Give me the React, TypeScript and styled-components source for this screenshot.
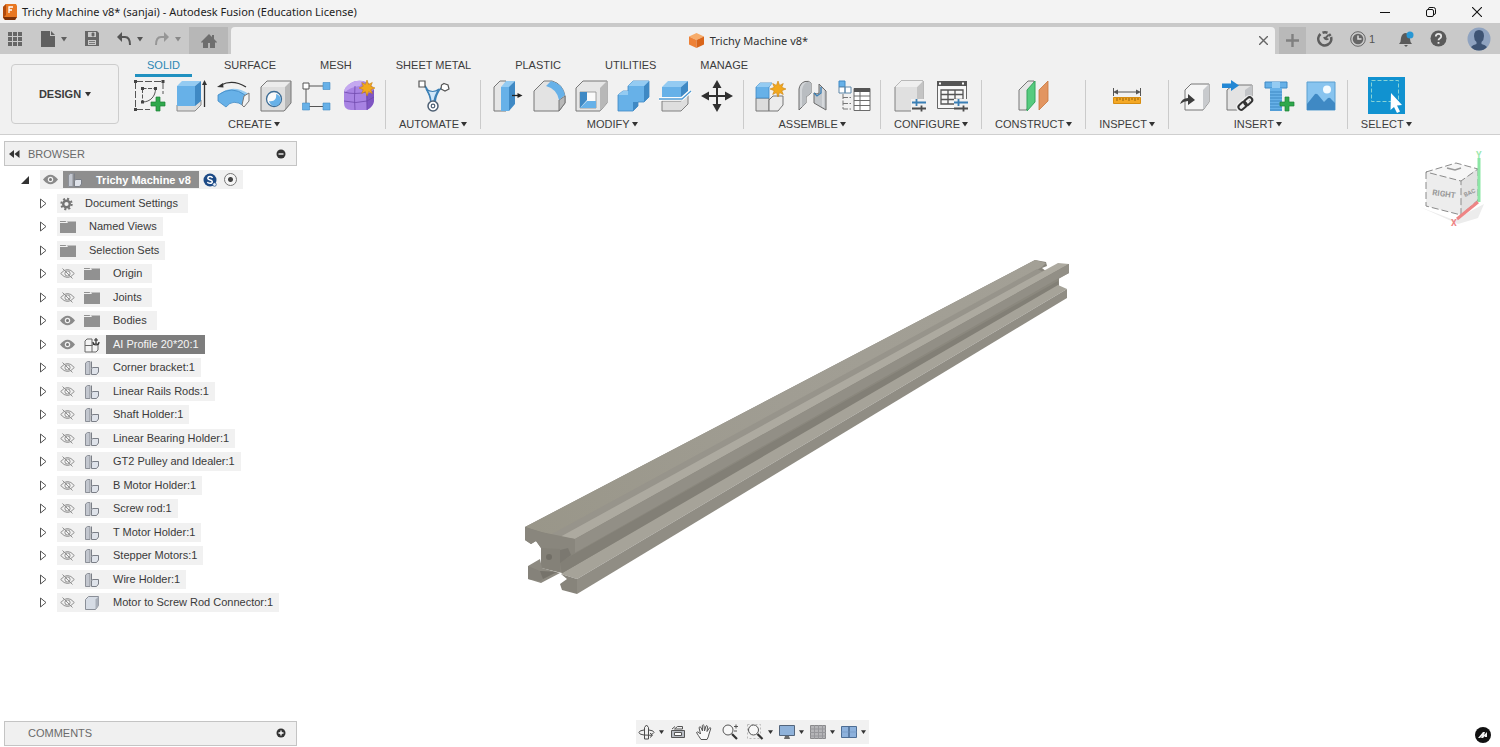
import React from "react";
import styled, { createGlobalStyle } from "styled-components";

const GlobalStyle = createGlobalStyle`
  *, *::before, *::after { box-sizing: border-box; }
  body {
    margin: 0;
    font-family: "Liberation Sans", Arial, sans-serif;
    font-size: 11px;
    line-height: 14px;
    color: #3c3c3c;
    background: #ffffff;
  }
  button { font: inherit; color: inherit; border: 0; padding: 0; background: none; }
  svg { display: block; flex: none; }
`;

const Page = styled.div`
  display: flex;
  flex-direction: column;
  min-height: 100vh;
`;

/* ---------- window title ---------- */

const TitleBar = styled.header`
  display: flex;
  align-items: center;
  height: 23px;
  padding-left: 2px;
  background: #f3f3f3;
`;

const WindowTitle = styled.h1`
  flex: 1;
  margin: 0 0 0 5px;
  font: 400 11px/16px "Noto Sans", "Open Sans", sans-serif;
  color: #1d1d1d;
  white-space: nowrap;
`;

const WindowButton = styled.button`
  display: grid;
  place-items: center;
  width: 46px;
  height: 23px;
`;

/* ---------- document bar ---------- */

const DocumentBar = styled.div`
  display: flex;
  height: 31px;
  background: #c9c9c9;
`;

const QuickTools = styled.div`
  display: flex;
  align-items: center;
  width: 189px;
  padding-left: 7px;
`;

const QuickButton = styled.button<{ $gap?: number }>`
  display: flex;
  align-items: center;
  gap: 6px;
  margin-right: ${(p) => p.$gap ?? 15}px;
`;

const HomeButton = styled.button`
  display: grid;
  place-items: center;
  width: 39px;
  margin-top: 4px;
  background: #b7b7b7;
`;

const DocumentTab = styled.div`
  display: flex;
  align-items: center;
  flex: 1;
  margin: 4px 0 0 3px;
  padding: 0 3px 0 10px;
  border-radius: 4px 4px 0 0;
  background: #f1f1f1;
`;

const DocumentName = styled.div`
  display: flex;
  flex: 1;
  align-items: center;
  justify-content: center;
  gap: 6px;
  font: 400 11px/16px "Noto Sans", "Open Sans", sans-serif;
  color: #333333;
`;

const IconButton = styled.button`
  display: grid;
  place-items: center;
  width: 16px;
  height: 16px;
`;

const NewTabButton = styled.button`
  display: grid;
  place-items: center;
  width: 27px;
  margin: 4px 0 0 4px;
  background: #b9b9b9;
`;

const AccountTools = styled.div`
  display: flex;
  align-items: center;
  padding: 0 9px 0 10px;
`;

const AccountButton = styled.button<{ $gap: number }>`
  display: flex;
  align-items: center;
  gap: 3px;
  margin-right: ${(p) => p.$gap}px;
  color: #555555;
`;

/* ---------- ribbon ---------- */

const Ribbon = styled.div`
  display: flex;
  height: 81px;
  padding-left: 11px;
  background: #f1f1f1;
  border-bottom: 1px solid #cfcfcf;
`;

const WorkspaceButton = styled.button`
  display: flex;
  align-items: center;
  justify-content: center;
  gap: 4px;
  width: 108px;
  height: 60px;
  margin-top: 10px;
  border: 1px solid #cdcdcd;
  border-radius: 4px;
  font-weight: 700;
`;

const RibbonBody = styled.div`
  flex: 1;
  padding-left: 4px;
`;

const RibbonTabs = styled.nav`
  display: flex;
  gap: 20px;
  padding-left: 12px;
`;

const RibbonTab = styled.button<{ $active?: boolean }>`
  height: 23px;
  padding: 2px 12px 0;
  border-bottom: 3px solid ${(p) => (p.$active ? "#2191c0" : "transparent")};
  color: ${(p) => (p.$active ? "#2a87b4" : "#3c3c3c")};
`;

const Groups = styled.div`
  display: flex;
  padding-top: 3px;
`;

const Group = styled.section`
  display: flex;
  flex-direction: column;
  align-items: center;
  height: 49px;
  border-right: 1px solid #cbcbcb;
  &:last-child { border-right: 0; }
`;

const GroupTools = styled.div`
  display: flex;
  gap: 10px;
  padding: 0 10px;
`;

const Tool = styled.button<{ $selected?: boolean }>`
  display: grid;
  place-items: center;
  width: ${(p) => (p.$selected ? 37 : 32)}px;
  height: ${(p) => (p.$selected ? 37 : 32)}px;
  margin: ${(p) => (p.$selected ? "-3px 0 -2px" : "0")};
  background: ${(p) => (p.$selected ? "#1192d0" : "none")};
`;

const GroupMenu = styled.button`
  display: flex;
  align-items: center;
  gap: 2px;
  margin-top: 5px;
  padding: 0 13px;
  white-space: nowrap;
`;

/* ---------- canvas ---------- */

const Canvas = styled.main`
  position: relative;
  display: flex;
  flex: 1;
  flex-direction: column;
  background: #ffffff;
`;

const Model = styled.svg`
  position: absolute;
  top: 120px;
  left: calc(50% - 230px);
`;

const ViewCube = styled.svg`
  position: absolute;
  top: 10px;
  right: 10px;
`;

const PanelHeader = styled.div<{ $indent?: boolean }>`
  display: flex;
  align-items: center;
  gap: 8px;
  width: 293px;
  height: 25px;
  padding: 0 7px 0 ${(p) => (p.$indent ? 23 : 4)}px;
  border: 1px solid #c4c4c4;
  background: #f0f0f0;
  color: #6a6a6a;
`;

const PanelTitle = styled.h2`
  flex: 1;
  margin: 0;
  font-size: 11px;
  font-weight: 400;
`;

const Browser = styled.aside`
  position: relative;
  flex: 1;
  padding: 6px 0 0 4px;
`;

const Tree = styled.ul`
  margin: 4px 0 0;
  padding: 0;
  list-style: none;
`;

const TreeItem = styled.li<{ $root?: boolean }>`
  display: flex;
  align-items: center;
  gap: ${(p) => (p.$root ? 10 : 9)}px;
  height: 19px;
  margin-top: 4px;
  padding-left: ${(p) => (p.$root ? 16 : 34)}px;
  &:nth-child(even) { margin-top: 5px; }
`;

const Twisty = styled.button`
  display: grid;
  place-items: center;
  width: 10px;
  height: 16px;
`;

const TreeContent = styled.div`
  display: flex;
  align-items: center;
  height: 19px;
  padding-left: 3px;
  background: #f1f1f1;
`;

const EyeButton = styled.button`
  display: grid;
  place-items: center;
  width: 15px;
  height: 19px;
  margin-right: 9px;
`;

const NodeLabel = styled.span<{ $selected?: boolean; $folder?: boolean; $tight?: boolean }>`
  height: 19px;
  margin-left: ${(p) => (p.$tight ? 2 : 6)}px;
  padding: 0 ${(p) => (p.$folder ? 10 : 6)}px 0 7px;
  line-height: 19px;
  white-space: nowrap;
  color: ${(p) => (p.$selected ? "#f6f6f6" : "#3a3a3a")};
  background: ${(p) => (p.$selected ? "#7d7d7d" : "none")};
`;

const RootLabel = styled.span`
  display: flex;
  align-items: center;
  gap: 13px;
  height: 17px;
  margin-left: -4px;
  padding: 0 8px 0 4px;
  background: #8e8e8e;
  color: #ffffff;
  font-weight: 700;
  white-space: nowrap;
`;

const SyncBadge = styled.span`
  display: grid;
  place-items: center;
  margin: 0 7px 0 4px;
`;

const ActivateRadio = styled.input`
  appearance: none;
  width: 13px;
  height: 13px;
  margin: 0 6px 0 0;
  border: 1px solid #777777;
  border-radius: 50%;
  background: radial-gradient(circle, #444444 0 2px, #f5f5f5 3px);
`;

const Footer = styled.footer`
  position: relative;
  display: grid;
  grid-template-columns: 1fr auto 1fr;
  align-items: center;
  padding: 0 0 1px 4px;
`;

const NavBar = styled.div`
  display: flex;
  align-items: center;
  height: 24px;
  margin-bottom: 2px;
  padding: 0 3px 0 2px;
  background: #f1f1f1;
`;

const NavButton = styled.button<{ $gap?: number }>`
  display: flex;
  align-items: center;
  gap: 4px;
  margin-right: ${(p) => p.$gap ?? 0}px;
`;

const AssistantButton = styled.button`
  place-self: end;
  margin: 0 9px 3px 0;
`;

/* ---------- small glyphs ---------- */

const Caret = ({ color = "#333", size = 6 }: { color?: string; size?: number }) => (
  <svg width={size} height="6" viewBox="0 0 6 6">
    <path d="M0 1h6L3 5.5z" fill={color} />
  </svg>
);

const Star = ({ x, y }: { x: number; y: number }) => (
  <g transform={`translate(${x} ${y})`}>
    <path
      d="M0-8 1.6-3.6 5.3-5.5 3.8-1.7 8 0 3.8 1.7 5.3 5.5 1.6 3.6 0 8-1.6 3.6-5.3 5.5-3.8 1.7-8 0-3.8-1.7-5.3-5.5-1.6-3.6z"
      fill="#f2a81d"
      stroke="#c98310"
      strokeWidth=".6"
    />
  </g>
);

const Plus = ({ x, y }: { x: number; y: number }) => (
  <path
    d={`M${x - 2} ${y - 7}h4v5h5v4h-5v5h-4v-5h-5v-4h5z`}
    fill="#2fa84c"
    stroke="#1d8238"
    strokeWidth=".7"
  />
);

const BLUE = "#67b1e8";
const BLUE_DARK = "#3f89c4";
const BLUE_LIGHT = "#94cbf2";
const EDGE = "#6b6b6b";

const Svg32 = ({ children }: { children: React.ReactNode }) => (
  <svg width="32" height="32" viewBox="0 0 32 32" fill="none" overflow="visible">
    {children}
  </svg>
);

const Sliders = ({ x, y }: { x: number; y: number }) => (
  <g transform={`translate(${x} ${y})`} strokeWidth="1.8">
    <path d="M0 2.500h14M4.500-1v7" stroke="#3a7fb5" />
    <path d="M0 8.500h14M9.500 5.500v6" stroke="#4d4d4d" />
  </g>
);

const icons = {
  sketch: (
    <Svg32>
      <path d="M3 1.500h27M2.500 2v27M30 2v12M3 29.500h14" stroke="#555" strokeDasharray="7 2" />
      <path d="M9.500 8.500h13M9.500 9v13" stroke="#555" strokeDasharray="4 1.500" />
      <path d="M22.500 9c0 7-5 13-13 13" stroke="#555" />
      <path d="M1 0h3v3H1zM28.500 0h3v3h-3zM1 28h3v3H1zM8 7h3v3H8zM21 7h3v3h-3zM8 20.500h3v3H8z" fill="#444" />
      <Plus x={25} y={24} />
    </Svg32>
  ),
  extrude: (
    <Svg32>
      <path d="M2 25h18l6-5v5l-6 6H2z" fill="#dcdcdc" stroke="#8a8a8a" />
      <path d="M2 6l5-5h19l-6 5z" fill={BLUE_LIGHT} />
      <path d="M2 6h18v20H2z" fill={BLUE} />
      <path d="M20 6l6-5v20l-6 5z" fill={BLUE_DARK} />
      <path d="M29.500 27V4" stroke="#333" strokeWidth="1.300" />
      <path d="M29.500 0l2.500 5h-5z" fill="#333" />
    </Svg32>
  ),
  revolve: (
    <Svg32>
      <path d="M4 5Q16-1 29 7" stroke="#333" strokeWidth="1.300" />
      <path d="M0 7l6-4 .5 4.500z" fill="#333" />
      <path d="M1 15Q15 3 32 14l-3 4Q15 9 3 19z" fill={BLUE_LIGHT} />
      <path d="M1 15Q15 5 28 15l-1 11Q16 18 9 27L1 21z" fill={BLUE} stroke={BLUE_DARK} strokeWidth=".8" />
      <path d="M27 16l5-3v8l-5 6-2-2z" fill="#f3f3f3" stroke="#777" />
    </Svg32>
  ),
  hole: (
    <Svg32>
      <path d="M2 7l6-6h24l-6 6z" fill="#ececec" />
      <path d="M26 7l6-6v22l-6 8z" fill="#b8b8b8" />
      <path d="M2 7h24v24H2z" fill="#dedede" />
      <path d="M2 7l6-6h24v22l-7 8H2z" stroke="#777" />
      <circle cx="15" cy="19" r="7.500" fill="#fafafa" stroke="#3d6d96" strokeWidth="1.300" />
      <path d="M17 14a6 6 0 1 1-7 7c5 1 8-2 7-7z" fill={BLUE} />
    </Svg32>
  ),
  pattern: (
    <Svg32>
      <path d="M8 6h14M5 9v14M8 26.500h14" stroke="#555" />
      <path d="M2 3h6v6H2z" fill="#fff" stroke="#555" />
      <path d="M22 2.500h7v7h-7zM1.500 23h7v7h-7zM22 23h7v7h-7z" fill={BLUE} stroke={BLUE_DARK} strokeWidth=".6" />
    </Svg32>
  ),
  form: (
    <Svg32>
      <path d="M1 13Q1 7 8 3q4-3 12-2 9 2 11 9v11q-1 6-7 9H8q-7 0-7-7z" fill="#a883e3" />
      <path d="M23 14q6-1 8-5v12q-1 6-7 9z" fill="#7f56c2" />
      <path d="M1 13Q1 7 8 3q4-3 12-2l-3 5q-10 1-16 7z" fill="#c4a8f0" />
      <path d="M1 12q10 3 23 0v18M12 6q-1 12 0 24M1 21q12 3 23 0l7-4" stroke="#6f49ac" strokeWidth=".8" />
      <Star x={24} y={8} />
    </Svg32>
  ),
  automate: (
    <Svg32>
      <path d="M4 4q5 1 7 8 3 5 3 12h4q0-7 3-12 2-4 7-6" stroke="#3a7fb5" strokeWidth="1.800" />
      <path d="M9 9q7 5 13 0-5 7-5 14h-3q0-8-5-14z" fill="#cfe6f8" stroke="#3a7fb5" strokeWidth="1.200" />
      <path d="M2 1h6v6H2z" fill="#fff" stroke="#555" strokeWidth="1.200" />
      <path d="M27 3.500l4 1.500 1 4-4 2-4-2 .5-4z" fill="#fff" stroke="#555" strokeWidth="1.200" />
      <circle cx="16" cy="26" r="5" fill="#fff" stroke="#4d5f73" strokeWidth="1.500" />
      <circle cx="16" cy="26" r="1.800" stroke="#4d5f73" strokeWidth="1.200" />
    </Svg32>
  ),
  pressPull: (
    <Svg32>
      <path d="M3 7l6-6h6v30H3z" fill="#e6e6e6" stroke="#777" />
      <path d="M10 7l5-6h9l-5 6z" fill={BLUE_LIGHT} />
      <path d="M10 7h8v24h-8z" fill={BLUE} />
      <path d="M18 7l6-6v23l-6 7z" fill={BLUE_DARK} />
      <path d="M21 15.500h7" stroke="#222" strokeWidth="1.300" />
      <path d="M31.500 15.500l-5 2.500v-5z" fill="#222" />
    </Svg32>
  ),
  fillet: (
    <Svg32>
      <path d="M1 11L11 1h8q11 3 13 15v7l-6 8H1z" fill="#e3e3e3" stroke="#777" />
      <path d="M26 20l6-4v7l-6 8z" fill="#b8b8b8" stroke="#777" />
      <path d="M13 6l5-5q11 2 14 14l-6 5Q24 9 13 6z" fill={BLUE} />
    </Svg32>
  ),
  shell: (
    <Svg32>
      <path d="M1 8l7-7h24v22l-7 8H1z" fill="#e6e6e6" stroke="#777" />
      <path d="M25 8l7-7v22l-7 8z" fill="#b8b8b8" />
      <path d="M5 12h16v16H5z" fill="#fafafa" stroke="#8a8a8a" strokeWidth=".8" />
      <path d="M5 12h7v8l-7 8z" fill={BLUE_DARK} />
      <path d="M5 28l7-7h9v7z" fill={BLUE} />
    </Svg32>
  ),
  combine: (
    <Svg32>
      <path d="M11 6l5-5h16v16l-5 5h-6v4l-5 5H1V15l5-4h5z" fill={BLUE} stroke={BLUE_DARK} strokeWidth=".8" />
      <path d="M27 6l5-5v16l-5 5zM16 22h5v4l-5 5z" fill={BLUE_DARK} />
      <path d="M11 6l5-5h16l-5 5zM1 15l5-4h5v4z" fill={BLUE_LIGHT} />
    </Svg32>
  ),
  split: (
    <Svg32>
      <path d="M3 21h19l7-6v9l-7 7H3z" fill="#dedede" stroke="#808080" />
      <path d="M3 7l6-6h20l-7 6z" fill={BLUE_LIGHT} />
      <path d="M3 7h19v10H3z" fill={BLUE} />
      <path d="M22 7l7-6v10l-7 6z" fill={BLUE_DARK} />
      <path d="M0 19h23l9-8" stroke="#fff" strokeWidth="3.500" />
      <path d="M0 19h23l9-8" stroke="#4f9bd3" strokeWidth="1.300" />
    </Svg32>
  ),
  move: (
    <Svg32>
      <path d="M16 4v24M4 16h24" stroke="#303030" strokeWidth="2" />
      <path d="M16 0l4.500 8h-9zM16 32l4.500-8h-9zM0 16l8-4.500v9zM32 16l-8-4.500v9z" fill="#303030" />
    </Svg32>
  ),
  component: (
    <Svg32>
      <path d="M2 18h13v13H2z" fill="#dcdcdc" stroke="#777" />
      <path d="M15 20l4-4h10v9l-5 6h-9z" fill="#ececec" stroke="#777" />
      <path d="M2 7l4-4h12l-3 4v11H2z" fill={BLUE} stroke={BLUE_DARK} strokeWidth=".8" />
      <path d="M2 7l4-4h12l-3 4z" fill={BLUE_LIGHT} />
      <Star x={24} y={9} />
    </Svg32>
  ),
  joint: (
    <Svg32>
      <path d="M3 9q1-6 6-7.500 4-1 6 1.500v10l-5 4v6l-7 7z" fill="#d2d5d8" stroke="#6b6b6b" />
      <path d="M6 10q1-6 5-8 3-.5 4 1v10l-5 4v6l-4 4z" fill="#b9bdc1" />
      <path d="M18 13l3 1 2-1V4l7 7v19l-12-7z" fill="#c3c7cb" stroke="#6b6b6b" />
      <path d="M18 13l3 3 4-3V7" stroke="#3a7fb5" strokeWidth="1.300" />
      <path d="M27 9v18" stroke="#e8eaec" />
    </Svg32>
  ),
  jointTable: (
    <Svg32>
      <path d="M1 1h6v6H1z" fill={BLUE} stroke={BLUE_DARK} />
      <path d="M1 7h6v6H1zM7 7h6v6H7z" fill="#fff" stroke="#5d86a8" />
      <path d="M5 14v15M5 17.500h8M5 23.500h8M5 29h8" stroke="#777" strokeDasharray="5 1.500" />
      <path d="M16 8.500h16v22H16z" fill="#fff" stroke={EDGE} />
      <path d="M16 8h16v4H16z" fill="#555" />
      <path d="M16 16h16M16 20.500h16M16 25.500h16M22 12v18" stroke={EDGE} />
    </Svg32>
  ),
  configure: (
    <Svg32>
      <path d="M1 7l6-6h22v22l-5 8H1z" fill="#e0e0e0" stroke="#808080" />
      <path d="M23 7l6-6v22l-6 7z" fill="#c4c4c4" />
      <path d="M1 7l6-6h22l-6 6z" fill="#efefef" />
      <path d="M17 19h15v13H17z" fill="#f1f1f1" />
      <Sliders x={18} y={20} />
    </Svg32>
  ),
  configTable: (
    <Svg32>
      <path d="M1.500 1.500h29v27h-29z" fill="#f8f8f8" stroke="#666" />
      <path d="M1 1h30v5H1z" fill="#555" />
      <path d="M3 2.500h2v2H3zM26 2.500h2v2h-2z" fill="#fff" />
      <path d="M5 10h22v14H5zM5 14.500h22M5 19.500h22M12 10v14M19 10v14" stroke="#555" strokeWidth="1.300" />
      <path d="M18 19h14v13H18z" fill="#f1f1f1" />
      <Sliders x={18} y={20} />
    </Svg32>
  ),
  plane: (
    <Svg32>
      <path d="M1 10L10 1h6v20l-8 9H1z" fill="#e6e6e6" stroke="#777" />
      <path d="M9 10l8-9v21l-8 9z" fill="#56cb7f" stroke="#35a45d" />
      <path d="M21 10l9-9v20l-9 9z" fill="#e29560" stroke="#c8763d" strokeWidth=".8" />
    </Svg32>
  ),
  measure: (
    <Svg32>
      <path d="M2.500 8v8M29.500 8v8M4 12h24" stroke="#555" />
      <path d="M2 12l5-2.500v5zM30 12l-5-2.500v5z" fill="#555" />
      <path d="M2.500 17.500h27v6h-27z" fill="#f4a825" stroke="#d78d11" />
      <path d="M6 18v3M9 18v2M12 18v3M15 18v2M18 18v3M21 18v2M24 18v3M27 18v2" stroke="#93600a" />
    </Svg32>
  ),
  derive: (
    <Svg32>
      <path d="M6 10l6-6h18v18l-6 8H6z" fill="#f5f5f5" stroke="#777" />
      <path d="M24 10l6-6v18l-6 8z" fill="#c8cacd" />
      <path d="M1 24q2-6 8-6v-4l7 6-7 5v-4q-4 0-8 3z" fill="#3e3e3e" />
    </Svg32>
  ),
  insertLink: (
    <Svg32>
      <path d="M6 10l6-5h19v11l-7 14H6z" fill="#e3e3e3" stroke="#777" />
      <path d="M24 10l7-5v11l-7 8z" fill="#c2c4c7" />
      <path d="M1 3.500h9V0l8 5.500L10 11V8H1z" fill="#2387d4" />
      <g stroke="#f1f1f1" strokeWidth="5">
        <rect x="17" y="23" width="10" height="6" rx="3" transform="rotate(-42 22 26)" />
        <rect x="22" y="19" width="10" height="6" rx="3" transform="rotate(-42 27 22)" />
      </g>
      <g stroke="#333" strokeWidth="2">
        <rect x="17" y="23.500" width="9" height="5.500" rx="2.700" transform="rotate(-42 21 26)" />
        <rect x="22.500" y="18.500" width="9" height="5.500" rx="2.700" transform="rotate(-42 27 21)" />
      </g>
    </Svg32>
  ),
  fastener: (
    <Svg32>
      <path d="M2 2h22v6H2z" fill={BLUE} stroke={BLUE_DARK} />
      <path d="M9 2h8v6H9z" fill={BLUE_LIGHT} />
      <path d="M7 8h12v23H7z" fill={BLUE} />
      <path d="M7 12h12M7 15h12M7 18h12M7 21h12M7 24h12M7 27h12M7 30h12" stroke={BLUE_DARK} strokeWidth="1.200" />
      <Plus x={24} y={24} />
    </Svg32>
  ),
  canvas: (
    <Svg32>
      <path d="M2 2h28v28H2z" fill="#88c4ef" stroke="#5b9fd0" />
      <path d="M2 24l8-10q2-1 4 2l5 6 4-4q2-1 3 1l4 4v7H2z" fill="#3f89c4" />
      <circle cx="22" cy="9.500" r="4" fill="#f4fbff" />
    </Svg32>
  ),
  select: (
    <svg width="37" height="37" viewBox="0 0 37 37" fill="none">
      <path d="M3.500 3.500h27v21h-27z" stroke="#86d3d6" strokeDasharray="4 2" />
      <path d="M23 16l11 12-5 .5 3 6-3 1.500-3-6-3.500 3z" fill="#fff" />
    </svg>
  ),
};

type IconName = keyof typeof icons;

const groups: { label: string; tools: [IconName, string][] }[] = [
  {
    label: "CREATE",
    tools: [
      ["sketch", "Create Sketch"],
      ["extrude", "Extrude"],
      ["revolve", "Revolve"],
      ["hole", "Hole"],
      ["pattern", "Rectangular Pattern"],
      ["form", "Create Form"],
    ],
  },
  { label: "AUTOMATE", tools: [["automate", "Automated Modeling"]] },
  {
    label: "MODIFY",
    tools: [
      ["pressPull", "Press Pull"],
      ["fillet", "Fillet"],
      ["shell", "Shell"],
      ["combine", "Combine"],
      ["split", "Split Body"],
      ["move", "Move"],
    ],
  },
  {
    label: "ASSEMBLE",
    tools: [
      ["component", "New Component"],
      ["joint", "Joint"],
      ["jointTable", "Joint Table"],
    ],
  },
  {
    label: "CONFIGURE",
    tools: [
      ["configure", "Configure"],
      ["configTable", "Configuration Table"],
    ],
  },
  { label: "CONSTRUCT", tools: [["plane", "Offset Plane"]] },
  { label: "INSPECT", tools: [["measure", "Measure"]] },
  {
    label: "INSERT",
    tools: [
      ["derive", "Insert Derive"],
      ["insertLink", "Insert Component"],
      ["fastener", "Insert Fastener"],
      ["canvas", "Insert Canvas"],
    ],
  },
  { label: "SELECT", tools: [["select", "Select"]] },
];

const ribbonTabs = ["SOLID", "SURFACE", "MESH", "SHEET METAL", "PLASTIC", "UTILITIES", "MANAGE"];

/* ---------- browser tree glyphs ---------- */

const Eye = ({ hidden }: { hidden?: boolean }) => (
  <svg width="15" height="11" viewBox="0 0 15 11" fill="none">
    {hidden ? (
      <g stroke="#909090">
        <path d="M.7 5.500Q7.500-2.500 14.300 5.500 7.500 13.500.7 5.500z" />
        <circle cx="7.500" cy="5.500" r="2.600" />
        <path d="M2.500.5l10 10" />
      </g>
    ) : (
      <>
        <path d="M0 5.500Q7.500-4 15 5.500 7.500 15 0 5.500z" fill="#8a8a8a" />
        <circle cx="7.500" cy="5.500" r="2.700" fill="#f1f1f1" />
        <circle cx="7.500" cy="5.500" r="1.500" fill="#777" />
      </>
    )}
  </svg>
);

type NodeIcon = "gear" | "folder" | "anchored" | "component" | "body";

const NodeGlyph = ({ icon }: { icon: NodeIcon }) => (
  <svg width="16" height="16" viewBox="0 0 16 16" fill="none">
    {icon === "gear" && (
      <>
        <circle cx="6.500" cy="8" r="5.200" stroke="#757575" strokeWidth="2" strokeDasharray="2.040 2.040" />
        <circle cx="6.500" cy="8" r="3.300" stroke="#757575" strokeWidth="2.400" />
      </>
    )}
    {icon === "folder" && (
      <>
        <path d="M0 4h16v10H0zM7 2.500h9V4H8z" fill="#919191" />
        <path d="M0 2h5.500l1 1H0z" fill="#919191" />
      </>
    )}
    {icon === "component" && (
      <>
        <path d="M1.500 3l2-1.500H6v13H1.500z" fill="#c3c7cf" stroke="#8c9098" />
        <path d="M7.500 1.500v6.500M7.500 8.500l1.500-1h5.500V12l-2 2.500h-5z" fill="#dfe3ea" stroke="#7b7f87" />
      </>
    )}
    {icon === "anchored" && (
      <>
        <path d="M1 4l2-2h5v13H1zM1 8.500h7l2-1.500h4v6l-2 2H8" fill="#f4f4f4" stroke="#686868" />
        <path d="M12 1v6M10 3h4M9 5q0 3 3 3t3-3" stroke="#333" strokeWidth="1.200" />
      </>
    )}
    {icon === "body" && (
      <>
        <path d="M1.500 4.500l3-3h10v9l-3 4h-10z" fill="#d6dce5" stroke="#8a8f98" />
        <path d="M11.500 4.500l3-3v9l-3 4z" fill="#a9afb9" />
      </>
    )}
  </svg>
);

interface TreeNode {
  label: string;
  icon: NodeIcon;
  eye?: "on" | "off";
  selected?: boolean;
}

const nodes: TreeNode[] = [
  { label: "Document Settings", icon: "gear" },
  { label: "Named Views", icon: "folder" },
  { label: "Selection Sets", icon: "folder" },
  { label: "Origin", icon: "folder", eye: "off" },
  { label: "Joints", icon: "folder", eye: "off" },
  { label: "Bodies", icon: "folder", eye: "on" },
  { label: "AI Profile 20*20:1", icon: "anchored", eye: "on", selected: true },
  { label: "Corner bracket:1", icon: "component", eye: "off" },
  { label: "Linear Rails Rods:1", icon: "component", eye: "off" },
  { label: "Shaft Holder:1", icon: "component", eye: "off" },
  { label: "Linear Bearing Holder:1", icon: "component", eye: "off" },
  { label: "GT2 Pulley and Idealer:1", icon: "component", eye: "off" },
  { label: "B Motor Holder:1", icon: "component", eye: "off" },
  { label: "Screw rod:1", icon: "component", eye: "off" },
  { label: "T Motor Holder:1", icon: "component", eye: "off" },
  { label: "Stepper Motors:1", icon: "component", eye: "off" },
  { label: "Wire Holder:1", icon: "component", eye: "off" },
  { label: "Motor to Screw Rod Connector:1", icon: "body", eye: "off" },
];

/* Extruded aluminium profile, drawn in canvas units. */
const ProfileModel = () => (
  <Model width="560" height="350" viewBox="520 255 560 350" role="img" aria-label="AI Profile 20*20">
    <defs>
      <linearGradient id="top" x1="525" y1="540" x2="1040" y2="260" gradientUnits="userSpaceOnUse">
        <stop offset="0" stopColor="#999689" />
        <stop offset=".5" stopColor="#a09d93" />
        <stop offset="1" stopColor="#a3a096" />
      </linearGradient>
    </defs>
    {/* upper half: both top flanges */}
    <path d="M525 527 1035 260l11 2 1 4-5 2 5 4 11-8 11 0v9l-10 5v9L562 573l-21-5v-20l-5-7-5 3-6-4z" fill="#88857c" />
    <path d="M525 527 1035 260l11 3-4 4-484 270z" fill="url(#top)" />
    <path d="M552 534 1037 269l9 4-484 265z" fill="#97948b" />
    <path d="M560 537 1058 263l11 1-494 275z" fill="#adaaa0" />
    <path d="M575 539 1069 264v9L575 553z" fill="#928f86" />
    <path d="M575 553 1059 278v4L562 562z" fill="#8b887e" />
    <path d="M560 562 1058 281v7L562 574z" fill="#827f76" />
    {/* lower right flange */}
    <path d="M561 574 1058 285l9 4-490 290z" fill="#a6a399" />
    <path d="M577 579 1067 289v9L577 594z" fill="#908d84" />
    {/* end face */}
    <path d="M525 527l16 5 20 4 14 3v14l-4 2-3-5-8 9v13l-19-5v-19l-5-7-5 3-6-4z" fill="#89867d" />
    <path d="M541 548l19 1v23l-19-5z" fill="#848178" />
    <path d="M560 550l8-2 3 7-11 8z" fill="#7b7870" />
    <circle cx="549" cy="557" r="3" fill="#716e66" />
    <path d="M528 566l12-7 2 9 18 5-19 10-13-4z" fill="#8d8a81" />
    <path d="M528 566l12 5 14 1-14 9-12-2z" fill="#85827a" />
    <path d="M540 571l17 1-14 7z" fill="#76736b" />
    <path d="M561 574l16 5v15l-15-4-2-6 7-5z" fill="#87847b" />
  </Model>
);

const Cube = () => (
  <ViewCube width="72" height="86" viewBox="1418 145 72 86" fill="none" role="img" aria-label="View cube">
    <path d="M1420 207l34 13 30-16-6 14-20 6z" fill="#ececec" />
    <path d="M1426 172l30-9 22 6-17 13z" fill="#f6f6f6" />
    <path d="M1426 172l35 9v34l-35-9z" fill="#ededed" />
    <path d="M1461 181l17-13v33l-17 14z" fill="#e2e2e2" />
    <path
      d="M1426 172l30-9 22 6-17 12zM1426 172v34l35 9v-34M1478 169v31l-17 15"
      stroke="#8b8b8b"
      strokeDasharray="7 3"
    />
    <path d="M1479 202v-44" stroke="#8be6a4" strokeWidth="3" />
    <path d="M1478 202l-21 17" stroke="#ee8585" strokeWidth="3" />
    <path d="M1447 168l8 2 6-2" stroke="#9a9a9a" strokeWidth="1.500" />
    <g fontFamily="Roboto, sans-serif" fontWeight="700">
      <text x="1432" y="195" fontSize="8" fill="#999" transform="rotate(8 1432 195)">RIGHT</text>
      <text x="1465" y="197" fontSize="6" fill="#999" transform="rotate(-24 1465 197)">BAC</text>
      <text x="1476" y="158" fontSize="9" fill="#9be8ae">Y</text>
      <text x="1451" y="226" fontSize="9" fill="#ee8585">X</text>
    </g>
  </ViewCube>
);

const navGlyphs = {
  orbit: (
    <svg width="17" height="17" viewBox="0 0 17 17" fill="none" stroke="#4d4d4d" strokeWidth="1">
      <path d="M6.500 15V3.500L8.500 1l2 2.500V15z" />
      <path d="M6 6Q1 6.500 1 8.500T6 11l8 .3M11 6q5 .5 5 2.500-1 1.500-3 2M12 9l2.500 2.300L12 13.500" />
    </svg>
  ),
  lookAt: (
    <svg width="16" height="16" viewBox="0 0 16 16" fill="none" stroke="#555">
      <path d="M1.500 6.500h13v7h-13z" fill="#b9bdc4" />
      <path d="M4.500 8.500h7v3h-7z" fill="#fff" />
      <path d="M2 5l3-2.500M4.500 5l3-2.500h5V5z" />
    </svg>
  ),
  hand: (
    <svg width="18" height="18" viewBox="0 0 18 18">
      <path
        d="M6 16.500Q3 12 1.500 9.500q1-1.500 3 .5l1 1L4 4.500q1-1.500 2 0L7.500 8 7.300 2.500q1-1.500 1.700 0l.5 5.500L11 3q1-1 1.600.3L12 8.500l2.500-3.700q1.500-.4 1.200 1L14 11q-.5 3-2 5.500z"
        fill="#fafafa"
        stroke="#555"
      />
    </svg>
  ),
  zoom: (
    <svg width="18" height="18" viewBox="0 0 18 18" fill="none" stroke="#555">
      <circle cx="7" cy="7" r="5" fill="#f8f8f8" />
      <path d="M11 11l5 5" stroke="#333" strokeWidth="2.200" />
      <path d="M13 3.500h4M15 1.500v4M13 8h3" />
    </svg>
  ),
  zoomWindow: (
    <svg width="18" height="18" viewBox="0 0 18 18" fill="none" stroke="#555">
      <path d="M1.500 1.500h13v14h-13z" stroke="#bbb" strokeDasharray="2 2" />
      <circle cx="7.500" cy="7" r="5" fill="#f8f8f8" />
      <path d="M11.500 11l5 5" stroke="#333" strokeWidth="2.200" />
    </svg>
  ),
  display: (
    <svg width="16" height="16" viewBox="0 0 16 16">
      <path d="M.5 1.500h15v10H.5z" fill="#8fb2da" stroke="#53657c" />
      <path d="M6 12h4l1 3H5z" fill="#6b6b6b" />
    </svg>
  ),
  grid: (
    <svg width="16" height="16" viewBox="0 0 16 16">
      <path d="M.5 1.500h15v13H.5z" fill="#b5b5b8" stroke="#8a8a8c" />
      <path d="M4.500 1v14M8.500 1v14M12.500 1v14M0 5h16M0 8.500h16M0 12h16" stroke="#97979b" />
    </svg>
  ),
  panes: (
    <svg width="16" height="16" viewBox="0 0 16 16">
      <path d="M.5 2.500h15v11H.5z" fill="#8db1dc" stroke="#4d6d94" />
      <path d="M8 2v12" stroke="#4d6d94" strokeWidth="1.500" />
      <path d="M0 8h16" stroke="#6f93c0" strokeWidth=".6" />
    </svg>
  ),
};

const navItems: { glyph: keyof typeof navGlyphs; title: string; menu?: boolean; gap: number }[] = [
  { glyph: "orbit", title: "Orbit", menu: true, gap: 6 },
  { glyph: "lookAt", title: "Look At", gap: 9 },
  { glyph: "hand", title: "Pan", gap: 8 },
  { glyph: "zoom", title: "Zoom", gap: 7 },
  { glyph: "zoomWindow", title: "Zoom Window", menu: true, gap: 6 },
  { glyph: "display", title: "Display Settings", menu: true, gap: 6 },
  { glyph: "grid", title: "Grid and Snaps", menu: true, gap: 6 },
  { glyph: "panes", title: "Viewports", menu: true, gap: 0 },
];

const App = () => (
  <Page>
    <GlobalStyle />
    <TitleBar>
      <svg width="15" height="16" viewBox="0 0 15 16">
        <path d="M1 3l3-3h10l1 2v11l-2 3H3l-2-2z" fill="#e87722" />
        <path d="M1 3l3-3v11l-3 3z" fill="#b14a0c" />
        <path d="M1 13h14l-2 3H3z" fill="#7b3108" />
        <path d="M7 9V3h4M7 6h3" stroke="#fff" strokeWidth="1.300" fill="none" />
      </svg>
      <WindowTitle>Trichy Machine v8* (sanjai) - Autodesk Fusion (Education License)</WindowTitle>
      <WindowButton aria-label="Minimize">
        <svg width="10" height="10"><path d="M0 5.500h10" stroke="#111" /></svg>
      </WindowButton>
      <WindowButton aria-label="Restore">
        <svg width="10" height="10" fill="none" stroke="#111">
          <rect x=".5" y="2.500" width="7" height="7" rx="1.500" />
          <path d="M2.500 2V1.500Q2.500.5 4 .5h3.500Q9.500.5 9.500 2.500V6Q9.500 7.500 8 7.500" />
        </svg>
      </WindowButton>
      <WindowButton aria-label="Close window">
        <svg width="10" height="10"><path d="M0 0l10 10M10 0L0 10" stroke="#111" strokeWidth="1.100" /></svg>
      </WindowButton>
    </TitleBar>

    <DocumentBar>
      <QuickTools>
        <QuickButton $gap={18} aria-label="Data panel">
          <svg width="16" height="16" fill="#666">
            <path d="M1 1h4v4H1zM6 1h4v4H6zM11 1h4v4h-4zM1 6h4v4H1zM6 6h4v4H6zM11 6h4v4h-4zM1 11h4v4H1zM6 11h4v4H6zM11 11h4v4h-4z" />
          </svg>
        </QuickButton>
        <QuickButton $gap={18} aria-label="File">
          <svg width="14" height="16"><path d="M0 0h9v5h5v11H0zM10 0l4 4h-4z" fill="#606060" /></svg>
          <Caret color="#606060" />
        </QuickButton>
        <QuickButton $gap={18} aria-label="Save">
          <svg width="14" height="15">
            <path d="M0 0h12l2 2v13H0z" fill="#666" />
            <path d="M3 1h8v5H3zM3 9h8v5H3z" fill="#c9c9c9" />
            <path d="M7 2h2v3H7zM4 10.500h6M4 12.500h6" fill="#666" stroke="#666" strokeWidth=".8" />
          </svg>
        </QuickButton>
        <QuickButton $gap={12} aria-label="Undo">
          <svg width="14" height="14" fill="none">
            <path d="M2 5h6q5 0 5 8" stroke="#555" strokeWidth="2" />
            <path d="M5 0v10L0 5z" fill="#555" />
          </svg>
          <Caret color="#555" />
        </QuickButton>
        <QuickButton $gap={0} aria-label="Redo">
          <svg width="14" height="14" fill="none">
            <path d="M12 5H6q-5 0-5 8" stroke="#969696" strokeWidth="2" />
            <path d="M9 0v10l5-5z" fill="#969696" />
          </svg>
          <Caret color="#888" />
        </QuickButton>
      </QuickTools>
      <HomeButton aria-label="Home">
        <svg width="16" height="14"><path d="M8 0l3 3V1h2v4l3 3-1 1-1-1v6H9V9H7v5H2V8L1 9 0 8z" fill="#6e6e6e" /></svg>
      </HomeButton>
      <DocumentTab>
        <DocumentName>
          <svg width="15" height="15" viewBox="0 0 15 15">
            <path d="M7.500 0L15 3.500 7.500 7 0 3.500z" fill="#f7ac6a" />
            <path d="M0 3.500L7.500 7v8L0 11.500z" fill="#ee8136" />
            <path d="M15 3.500L7.500 7v8l7.500-3.500z" fill="#d9651a" />
          </svg>
          Trichy Machine v8*
        </DocumentName>
        <IconButton aria-label="Close document">
          <svg width="9" height="9"><path d="M0 0l9 9M9 0L0 9" stroke="#666" strokeWidth="1.400" /></svg>
        </IconButton>
      </DocumentTab>
      <NewTabButton aria-label="New design">
        <svg width="13" height="13"><path d="M6.500 0v13M0 6.500h13" stroke="#808080" strokeWidth="2.400" /></svg>
      </NewTabButton>
      <AccountTools>
        <AccountButton $gap={16} aria-label="Extensions">
          <svg width="18" height="16" viewBox="0 0 18 16" fill="none" stroke="#5e5e5e">
            <path d="M4.500 3A6.500 6.500 0 1 0 15 6" strokeWidth="2.600" />
            <path d="M6.500 1.800Q9 .8 11.500 1.800M13 3l1.500 2" strokeWidth="2.600" />
            <path d="M12.500 4L9 7.500M12.500 8Q9 9 8 6" strokeWidth="1.800" />
          </svg>
        </AccountButton>
        <AccountButton $gap={23} aria-label="Job status">
          <svg width="16" height="16" viewBox="0 0 16 16" fill="none">
            <circle cx="8" cy="8" r="7.300" stroke="#666" />
            <circle cx="8" cy="8" r="5.300" fill="#666" />
            <path d="M8 4.500V8h3.500" stroke="#ddd" strokeWidth="1.500" />
          </svg>
          <span>1</span>
        </AccountButton>
        <AccountButton $gap={16} aria-label="Notifications">
          <svg width="16" height="16" viewBox="0 0 16 16">
            <path d="M1 13q2-2 2-6 1-5 5-5 4 1 4 6 0 3 2 5z" fill="#5a5a5a" />
            <path d="M6 14h4l-2 2z" fill="#5a5a5a" />
            <circle cx="12" cy="4" r="3.500" fill="#2897d4" />
          </svg>
        </AccountButton>
        <AccountButton $gap={20} aria-label="Help">
          <svg width="17" height="17" viewBox="0 0 17 17" fill="none">
            <circle cx="8.500" cy="8.500" r="8" fill="#5a5a5a" />
            <path d="M5.800 6.500q0-2.700 2.700-2.700t2.700 2.400q0 1.300-1.500 2.200-1.200.8-1.200 1.900M8.500 12v1.800" stroke="#e6e6e6" strokeWidth="1.800" />
          </svg>
        </AccountButton>
        <AccountButton $gap={0} aria-label="Account">
          <svg width="24" height="24" viewBox="0 0 24 24">
            <circle cx="12" cy="12" r="11.500" fill="#8fa3c0" />
            <path d="M12 3q5 0 5 6 0 4-2.500 6v2q4 1 5.500 3-3 3.500-8 3.500T4 20q1.500-2 5.500-3v-2Q7 13 7 9q0-6 5-6z" fill="#3e5474" />
          </svg>
        </AccountButton>
      </AccountTools>
    </DocumentBar>

    <Ribbon>
      <WorkspaceButton>
        DESIGN
        <Caret />
      </WorkspaceButton>
      <RibbonBody>
        <RibbonTabs>
          {ribbonTabs.map((t, i) => (
            <RibbonTab key={t} $active={i === 0}>{t}</RibbonTab>
          ))}
        </RibbonTabs>
        <Groups>
          {groups.map((g) => (
            <Group key={g.label}>
              <GroupTools>
                {g.tools.map(([icon, title]) => (
                  <Tool key={icon} aria-label={title} $selected={icon === "select"}>
                    {icons[icon]}
                  </Tool>
                ))}
              </GroupTools>
              <GroupMenu>
                {g.label}
                <Caret />
              </GroupMenu>
            </Group>
          ))}
        </Groups>
      </RibbonBody>
    </Ribbon>

    <Canvas>
      <ProfileModel />
      <Cube />
      <Browser>
        <PanelHeader>
          <svg width="11" height="8"><path d="M5 0v8L0 4zM10.500 0v8l-5-4z" fill="#333" /></svg>
          <PanelTitle>BROWSER</PanelTitle>
          <IconButton aria-label="Collapse browser">
            <svg width="10" height="10"><circle cx="5" cy="5" r="4.500" fill="#333" /><path d="M2.500 5h5" stroke="#fff" strokeWidth="1.300" /></svg>
          </IconButton>
        </PanelHeader>
        <Tree>
          <TreeItem $root>
            <Twisty aria-label="Collapse Trichy Machine v8">
              <svg width="8" height="8"><path d="M8 0v8H0z" fill="#333" /></svg>
            </Twisty>
            <TreeContent>
              <EyeButton aria-label="Toggle visibility"><Eye /></EyeButton>
              <RootLabel>
                <NodeGlyph icon="component" />
                Trichy Machine v8
              </RootLabel>
              <SyncBadge>
                <svg width="14" height="14" viewBox="0 0 14 14" fill="none">
                  <circle cx="7" cy="7" r="6.500" fill="#1c4a86" />
                  <path d="M9.500 5Q9 3.500 7 3.500T4.800 5.200q0 1.300 2.200 1.700t2.300 1.800Q9.300 10.300 7 10.300T4.500 8.800" stroke="#fff" strokeWidth="1.500" />
                  <circle cx="11.500" cy="11.500" r="1.800" fill="#e8f0fa" stroke="#1c4a86" strokeWidth=".7" />
                </svg>
              </SyncBadge>
              <ActivateRadio type="radio" name="active" aria-label="Activate component" defaultChecked />
            </TreeContent>
          </TreeItem>
          {nodes.map((n) => (
            <TreeItem key={n.label}>
              <Twisty aria-label={`Expand ${n.label}`}>
                <svg width="8" height="11" fill="none"><path d="M1.500 1v9l5.500-4.500z" stroke="#555" /></svg>
              </Twisty>
              <TreeContent>
                {n.eye && (
                  <EyeButton aria-label="Toggle visibility"><Eye hidden={n.eye === "off"} /></EyeButton>
                )}
                <NodeGlyph icon={n.icon} />
                <NodeLabel
                  $selected={n.selected}
                  $folder={n.icon === "gear" || (n.icon === "folder" && n.eye !== undefined)}
                  $tight={n.icon === "gear"}
                >
                  {n.label}
                </NodeLabel>
              </TreeContent>
            </TreeItem>
          ))}
        </Tree>
      </Browser>
      <Footer>
        <PanelHeader $indent>
          <PanelTitle>COMMENTS</PanelTitle>
          <IconButton aria-label="Expand comments">
            <svg width="10" height="10"><circle cx="5" cy="5" r="4.500" fill="#333" /><path d="M2.500 5h5M5 2.500v5" stroke="#fff" strokeWidth="1.300" /></svg>
          </IconButton>
        </PanelHeader>
        <NavBar>
          {navItems.map((n) => (
            <NavButton key={n.glyph} $gap={n.gap} aria-label={n.title}>
              {navGlyphs[n.glyph]}
              {n.menu && <Caret size={5} />}
            </NavButton>
          ))}
        </NavBar>
        <AssistantButton aria-label="Assistant">
          <svg width="16" height="16" viewBox="0 0 16 16">
            <circle cx="8" cy="8" r="8" fill="#111" />
            <path d="M3 11l5-6h2L9 8l3-3v5h-2V9l-2 2H6l1-2-2 2z" fill="#f2f2f2" />
          </svg>
        </AssistantButton>
      </Footer>
    </Canvas>
  </Page>
);

export default App;
